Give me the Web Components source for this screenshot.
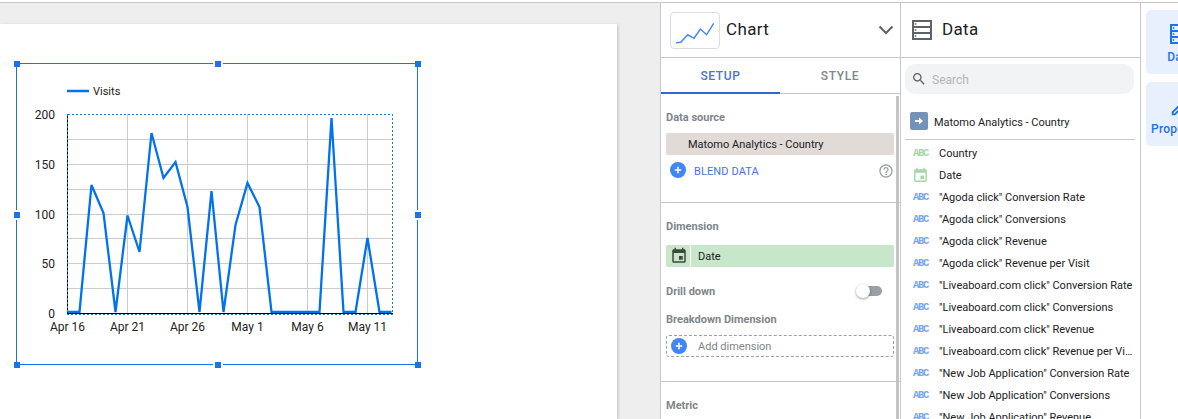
<!DOCTYPE html>
<html lang="en">
<head>
<meta charset="utf-8">
<title>Chart editor</title>
<style>
html,body{margin:0;padding:0;height:419px;overflow:hidden;background:#fff;font-family:Roboto,"Liberation Sans",sans-serif;color:#202124}
</style>
</head>
<body>
<x-app>
  <x-report-canvas slot="canvas"><x-line-chart></x-line-chart></x-report-canvas>
  <x-setup-panel slot="setup"></x-setup-panel>
  <x-data-panel slot="data"></x-data-panel>
  <x-side-tabs slot="tabs"></x-side-tabs>
</x-app>
<script>
const ICON = {
  event:'M17 12h-5v5h5v-5zM16 1v2H8V1H6v2H5c-1.11 0-1.99.9-1.99 2L3 19c0 1.1.89 2 2 2h14c1.1 0 2-.9 2-2V5c0-1.1-.9-2-2-2h-1V1h-2zm3 18H5V8h14v11z',
  help:'M11 18h2v-2h-2v2zm1-16C6.48 2 2 6.48 2 12s4.48 10 10 10 10-4.48 10-10S17.52 2 12 2zm0 18c-4.41 0-8-3.59-8-8s3.59-8 8-8 8 3.59 8 8-3.59 8-8 8zm0-14c-2.21 0-4 1.79-4 4h2c0-1.1.9-2 2-2s2 .9 2 2c0 2-3 1.75-3 5h2c0-2.25 3-2.5 3-5 0-2.21-1.79-4-4-4z',
  search:'M15.5 14h-.79l-.28-.27C15.41 12.59 16 11.11 16 9.5 16 5.91 13.09 3 9.5 3S3 5.91 3 9.5 5.91 16 9.5 16c1.61 0 3.09-.59 4.23-1.57l.27.28v.79l5 4.99L20.49 19l-4.99-5zm-6 0C7.01 14 5 11.99 5 9.5S7.01 5 9.5 5 14 7.01 14 9.5 11.99 14 9.5 14z',
  edit:'M14.06 9.02l.92.92L5.92 19H5v-.92l9.06-9.06M17.66 3c-.25 0-.51.1-.7.29l-1.83 1.83 3.75 3.75 1.83-1.83c.39-.39.39-1.02 0-1.41l-2.34-2.34c-.2-.2-.45-.29-.71-.29zm-3.6 3.19L3 17.25V21h3.75L17.81 9.94l-3.75-3.75z'
};
const svgIcon=(d,size,color)=>`<svg width="${size}" height="${size}" viewBox="0 0 24 24" fill="${color}" style="display:block;flex:none"><path d="${d}"/></svg>`;
const tableIcon=(color)=>`<svg width="20" height="20" viewBox="0 0 20 20" style="display:block;flex:none" fill="none" stroke="${color}" stroke-width="2"><rect x="1" y="1" width="18" height="18"/><path d="M1 7h18M1 13h18"/><path d="M3.5 3.2v1.6M3.5 9.2v1.6M3.5 15.2v1.6" stroke-width="1.6"/></svg>`;
const plusIcon=(size)=>`<svg width="${size}" height="${size}" viewBox="0 0 16 16" style="display:block;flex:none"><circle cx="8" cy="8" r="8" fill="#4285f4"/><path d="M8 4.8v6.4M4.8 8h6.4" stroke="#fff" stroke-width="1.6"/></svg>`;

function define(name, css, html){
  customElements.define(name, class extends HTMLElement{
    constructor(){
      super();
      const root=this.attachShadow({mode:'open'});
      root.innerHTML=`<style>${css}</style>`+(typeof html==='function'?html(this):html);
    }
  });
}

define('x-app',`
  :host{display:block;height:419px;box-sizing:border-box;padding-top:2px;background:#fff;overflow:hidden}
  .wrap{display:grid;grid-template-columns:661px 240px 240px 1fr;height:417px;border-top:1px solid #c7c7d1;box-sizing:border-box}
  .cell{min-width:0;overflow:hidden;border-right:1px solid #c7c7d1}
  .cell:last-child{border-right:0}
`,`<div class="wrap">
  <div class="cell"><slot name="canvas"></slot></div>
  <div class="cell"><slot name="setup"></slot></div>
  <div class="cell"><slot name="data"></slot></div>
  <div class="cell"><slot name="tabs"></slot></div>
</div>`);

define('x-report-canvas',`
  :host{display:block;height:416px;background:#eeeeee;padding-top:21px;box-sizing:border-box;overflow:hidden}
  .page{position:relative;width:617px;height:395px;background:#fff;box-shadow:1px 1px 3px rgba(0,0,0,.2)}
`,`<div class="page"><slot></slot></div>`);

const pts=[312,312,185,213,312,215.5,252,133,178,162,207,312,191,312,225,183,207,312,312,312,312,312,118,312,312,238,312,312];
const linePts=pts.map((y,i)=>`${67.5+i*12},${y}`).join(' ');
const hGrid=[139.5,164.5,189.5,214.5,238.5,263.5,288.5];
const vGrid=[127.5,187.5,247.5,307.5,367.5];
const handles=[[17,64],[218,64],[418,64],[17,215],[418,215],[17,365],[218,365],[418,365]];
define('x-line-chart',`
  :host{display:block;position:absolute;left:14px;top:37px;width:408px;height:308px}
  svg{display:block;font-family:Roboto,"Liberation Sans",sans-serif}
  text{fill:#222}
`,`<svg width="408" height="308" viewBox="14 61 408 308">
  <rect x="16.5" y="63.5" width="401" height="301" fill="none" stroke="#1a73e8" stroke-width="1"/>
  <g fill="#fff">
    <rect x="213" y="62" width="10" height="4"/><rect x="213" y="363" width="10" height="4"/>
    <rect x="15" y="210" width="4" height="10"/><rect x="416" y="210" width="4" height="10"/>
  </g>
  <g fill="#1a73e8">${handles.map(h=>`<rect x="${h[0]-3}" y="${h[1]-3}" width="6" height="6"/>`).join('')}</g>
  <line x1="67" y1="91" x2="89" y2="91" stroke="#0072f0" stroke-width="2.500"/>
  <text x="93" y="95" font-size="11">Visits</text>
  <g stroke="#cccccc" stroke-width="1">
    ${hGrid.map(y=>`<line x1="68" x2="392" y1="${y}" y2="${y}"/>`).join('')}
    ${vGrid.map(x=>`<line x1="${x}" x2="${x}" y1="114" y2="313"/>`).join('')}
  </g>
  <line x1="67.500" y1="114" x2="67.500" y2="314" stroke="#000" stroke-width="1"/>
  <line x1="67" y1="313.500" x2="393" y2="313.500" stroke="#000" stroke-width="1"/>
  <path d="M68 114.500H392.500V314.500H67.500V114" stroke="#1a73e8" stroke-width="1" stroke-dasharray="2 2" fill="none"/>
  <polyline points="${linePts}" fill="none" stroke="#0072f0" stroke-width="2.300" stroke-linejoin="miter"/>
  <g font-size="12" text-anchor="end">
    <text x="55" y="119">200</text><text x="55" y="168.500">150</text><text x="55" y="218.500">100</text><text x="55" y="268">50</text><text x="55" y="318">0</text>
  </g>
  <g font-size="12" text-anchor="middle">
    <text x="67.500" y="331">Apr 16</text><text x="127.500" y="331">Apr 21</text><text x="187.500" y="331">Apr 26</text><text x="247.500" y="331">May 1</text><text x="307.500" y="331">May 6</text><text x="367.500" y="331">May 11</text>
  </g>
</svg>`);

define('x-panel-header',`
  :host{display:flex;align-items:center;box-sizing:border-box;border-bottom:1px solid #c7c7d1;height:55px;font-size:17px;font-weight:400;color:#202124}
  .t{letter-spacing:.35px;margin-top:-2px}
`,`<slot name="lead"></slot><span class="t"><slot></slot></span><slot name="end"></slot>`);

define('x-label',`
  :host{display:block;font-size:11px;line-height:16px;height:14px;font-weight:700;color:#80868b}
`,`<slot></slot>`);

define('x-setup-panel',`
  :host{display:block;position:relative;height:416px;background:#fff;overflow:hidden}
  .lead{display:flex;margin-left:9px;margin-right:6px}
  .thumb{display:block;width:50px;height:37px;box-sizing:border-box;border:1px solid #dadce0;border-radius:4px}
  .chev{display:block;margin-left:109px}
  .tabs{display:flex;height:36px;box-sizing:border-box;border-bottom:1px solid #c7c7d1;font-size:12px;font-weight:500;letter-spacing:.6px}
  .tabs div{flex:none;width:119px;display:flex;align-items:center;justify-content:center;box-sizing:border-box;height:36px;color:#80868b}
  .tabs .on{color:#4b72d8;border-bottom:2px solid #2f67d8;padding-top:1px}
  .tabs .off{width:120px;padding-bottom:1px}
  section{padding:16px 6px 0 5px;border-bottom:1px solid #c7c7d1}
  section:last-of-type{border-bottom:0}
  .s1{height:92px}
  .s2{height:162px}
  .chip{display:flex;align-items:center;height:22px;width:228px;border-radius:2px;font-size:11px;box-sizing:border-box;color:#202124}
  .src{background:#e0dbd7;margin-top:9px;padding-left:22px}
  .blend{display:flex;align-items:center;height:20px;margin-top:5px;padding-left:4px;width:224px;color:#4b72d8;font-size:11px;letter-spacing:.1px}
  .blend span{margin-left:8px;margin-top:3px}
  .blend .q{margin-left:auto;margin-top:2px}
  .date{background:#c8e6c9;margin-top:12px}
  .date .ic{width:25px;height:22px;display:flex;align-items:center;justify-content:center;border-right:1px solid #fff;box-sizing:border-box;padding-left:1px}
  .date span{margin-left:7px}
  .row{display:flex;align-items:center;justify-content:space-between;height:20px;margin-top:14px;width:216px}
  .sw{position:relative;width:26px;height:12px;display:block}
  .sw i{position:absolute;right:0;top:1px;width:18px;height:10px;border-radius:5px;background:#9aa0a6}
  .sw b{position:absolute;left:0;top:-1px;width:14px;height:14px;border-radius:50%;background:#fff;box-shadow:0 1px 3px rgba(0,0,0,.4)}
  .bd{margin-top:11px}
  .add{display:flex;align-items:center;height:22px;width:228px;margin-top:9px;box-sizing:border-box;border:1px dashed #9aa0a6;border-radius:3px;padding-left:4px;font-size:11px;color:#80868b}
  .add span{margin-left:11px}
  .bar{position:absolute;right:1px;top:93px;width:3px;bottom:0;background:#c4c4c4}
`,`
  <x-panel-header>
    <span slot="lead" class="lead">
      <svg class="thumb" viewBox="0 0 50 37" width="50" height="37"><polyline points="5,31.500 10,31 17.300,23 24,26.700 30.700,17 37.300,23 44.700,11" fill="none" stroke="#4285f4" stroke-width="1.500"/></svg>
    </span>
    Chart
    <svg slot="end" class="chev" width="16" height="10" viewBox="0 0 16 10" fill="none" stroke="#5f6368" stroke-width="2"><path d="M1.500 1.500L8 8l6.500-6.500"/></svg>
  </x-panel-header>
  <div class="tabs"><div class="on">SETUP</div><div class="off">STYLE</div></div>
  <section class="s1">
    <x-label>Data source</x-label>
    <div class="chip src">Matomo Analytics - Country</div>
    <div class="blend">${plusIcon(16)}<span>BLEND DATA</span><span class="q">${svgIcon(ICON.help,16,'#9aa0a6')}</span></div>
  </section>
  <section class="s2">
    <x-label>Dimension</x-label>
    <div class="chip date"><div class="ic">${svgIcon(ICON.event,18,'#3c4a3e')}</div><span>Date</span></div>
    <div class="row"><x-label>Drill down</x-label><span class="sw"><i></i><b></b></span></div>
    <x-label class="bd">Breakdown Dimension</x-label>
    <div class="add">${plusIcon(16)}<span>Add dimension</span></div>
  </section>
  <section><x-label>Metric</x-label></section>
  <div class="bar"></div>
`);

define('x-field-row',`
  :host{display:flex;align-items:center;height:22px;font-size:11px;color:#202124;padding-left:12px;width:232px;box-sizing:border-box}
  .ic{width:26px;flex:none;display:flex;font-family:"Liberation Mono",monospace;font-size:10.5px;line-height:12px;letter-spacing:-1.3px;font-weight:700}
  .t{white-space:nowrap;overflow:hidden;text-overflow:ellipsis;min-width:0;flex:1}
`,(el)=>{
  const k=el.getAttribute('kind');
  const ic=k==='date'?svgIcon(ICON.event,17,'#a5d6a7').replace('display:block','display:block;margin-left:-1px'):`<span style="color:${k==='green'?'#a5d6a7':'#7aa5f5'}">ABC</span>`;
  return `<div class="ic">${ic}</div><div class="t"><slot></slot></div>`;
});

const fields=[['green','Country'],['date','Date'],['blue','"Agoda click" Conversion Rate'],['blue','"Agoda click" Conversions'],['blue','"Agoda click" Revenue'],['blue','"Agoda click" Revenue per Visit'],['blue','"Liveaboard.com click" Conversion Rate'],['blue','"Liveaboard.com click" Conversions'],['blue','"Liveaboard.com click" Revenue'],['blue','"Liveaboard.com click" Revenue per Visit'],['blue','"New Job Application" Conversion Rate'],['blue','"New Job Application" Conversions'],['blue','"New Job Application" Revenue']];
define('x-data-panel',`
  :host{display:block;height:416px;background:#fff;overflow:hidden}
  .lead{display:flex;margin-left:11px;margin-right:10px}
  .search{display:flex;align-items:center;height:30px;width:229px;margin:6px 0 0 4px;border-radius:10px;background:#f1f3f4;color:#b3b6ba;font-size:12px;padding-left:6px;box-sizing:border-box}
  .search span{margin:2px 0 0 5px}
  .src{display:flex;align-items:center;height:22px;margin:16px 0 0 4px;width:225px;padding:0 0 7px 5px;font-size:11px;border-bottom:1px solid #c7c7d1}
  .src svg{margin-right:6px}
  .src span{padding-top:2px}
  .list{padding-top:2px}
`,`
  <x-panel-header><span slot="lead" class="lead">${tableIcon('#5f6368')}</span>Data</x-panel-header>
  <div class="search">${svgIcon(ICON.search,16,'#5f6368')}<span>Search</span></div>
  <div class="src"><svg width="18" height="18" viewBox="0 0 18 18" style="display:block;flex:none"><rect width="18" height="18" rx="2" fill="#7393b9"/><path d="M5 8h4V5.500L13 9l-4 3.500V10H5z" fill="#fff"/></svg><span>Matomo Analytics - Country</span></div>
  <div class="list">${fields.map(f=>`<x-field-row kind="${f[0]}">${f[1]}</x-field-row>`).join('')}</div>
`);

define('x-side-tabs',`
  :host{display:block;height:416px;background:#fff;overflow:hidden;padding:7px 0 0 5px;box-sizing:border-box}
  .c{width:68px;height:64px;background:#e8f0fe;border-radius:5px;color:#1a73e8;font-size:12px;font-weight:500;letter-spacing:.2px;display:flex;flex-direction:column;align-items:center;padding-top:14px;box-sizing:border-box;margin-bottom:8px}
  .c span{margin-top:6px}
  .c.p span{margin-top:4px}
`,`
  <div class="c">${tableIcon('#1a73e8')}<span>Data</span></div>
  <div class="c p">${svgIcon(ICON.edit,22,'#1a73e8')}<span>Properties</span></div>
`);
</script>
</body>
</html>
